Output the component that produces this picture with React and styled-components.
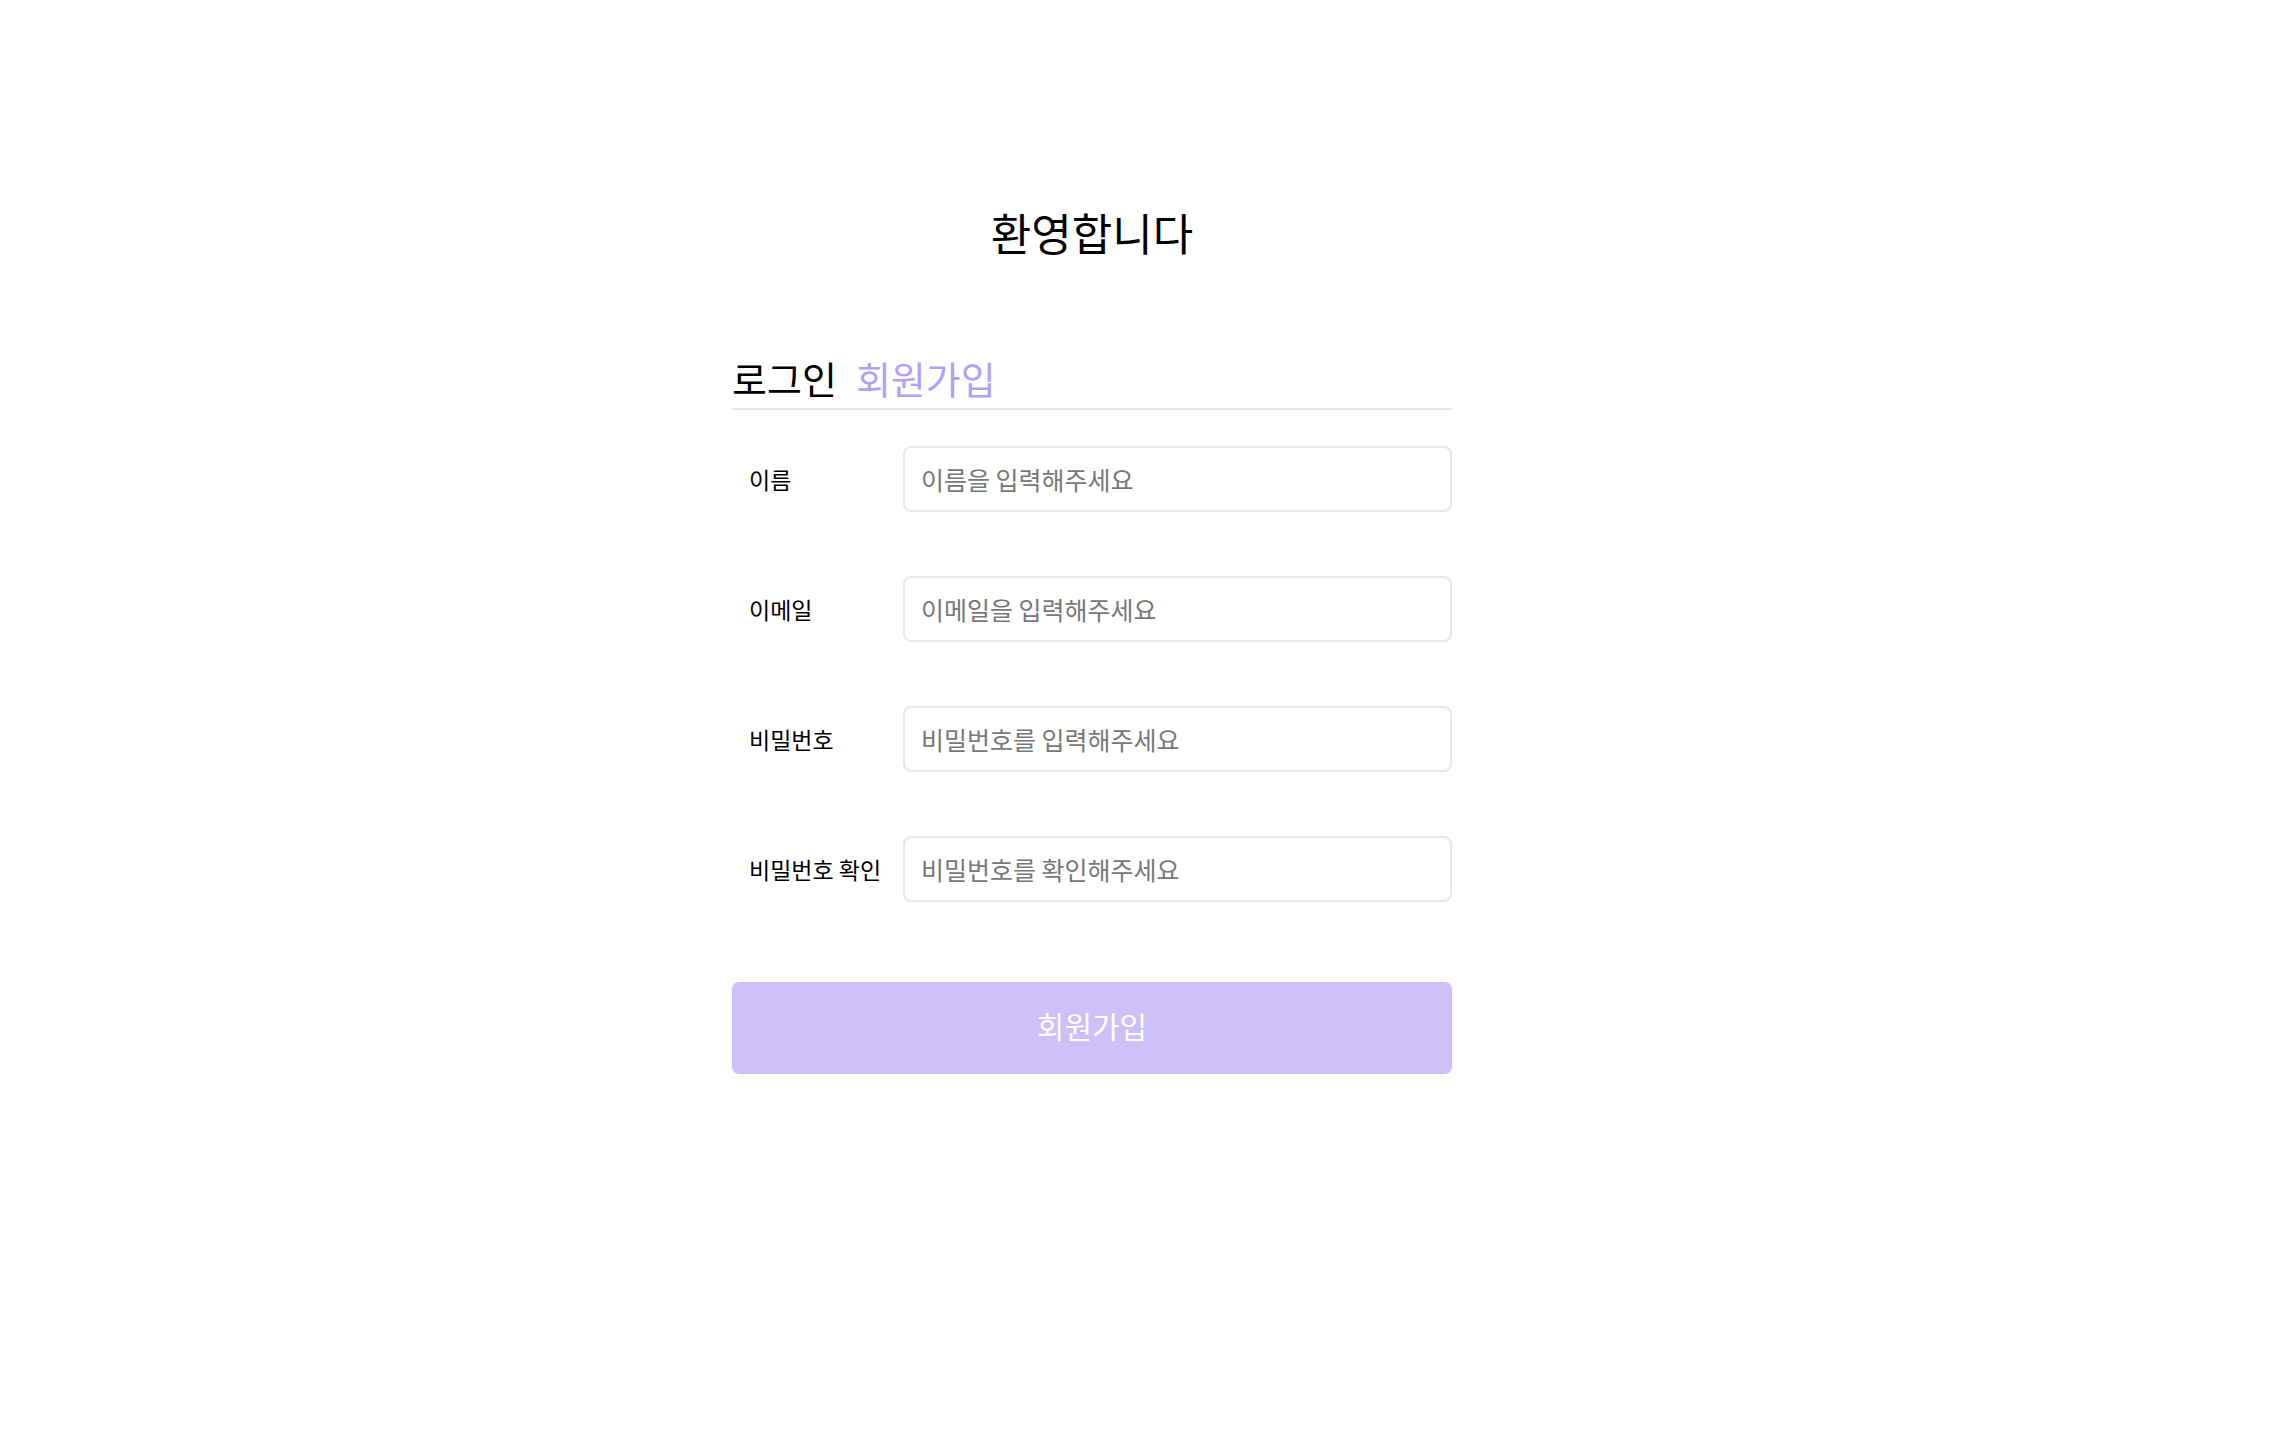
import React, { useState } from 'react';
import styled, { createGlobalStyle } from 'styled-components';

const GlobalStyle = createGlobalStyle`
  * {
    box-sizing: border-box;
  }

  body {
    margin: 0;
    background-color: #ffffff;
    font-family: "Noto Sans CJK KR", "Noto Sans", sans-serif;
    color: #000000;
  }
`;

const Page = styled.div`
  display: flex;
  justify-content: center;
  padding: 202px 86px 0 0;
  min-height: 1442px;
`;

const Container = styled.div`
  width: 720px;
  display: flex;
  flex-direction: column;
`;

const Title = styled.h1`
  margin: 0;
  text-align: center;
  font-size: 44px;
  font-weight: 400;
  line-height: 60px;
`;

const Tabs = styled.div`
  display: flex;
  gap: 19px;
  margin-top: 93px;
  padding-bottom: 7px;
  border-bottom: 2px solid #e6e6e6;
`;

const Tab = styled.button`
  padding: 0;
  border: none;
  background: none;
  cursor: pointer;
  font-family: inherit;
  font-size: 38px;
  font-weight: 400;
  line-height: 46px;
  color: ${(props) => props?.active ? '#b39ff8' : '#000000'};
`;

const Form = styled.form`
  display: flex;
  flex-direction: column;
  gap: 64px;
  margin-top: 36px;
`;

const Row = styled.div`
  display: flex;
  align-items: center;
  height: 66px;
`;

const Label = styled.label`
  width: 171px;
  padding-left: 17px;
  font-size: 23px;
  font-weight: 400;
  white-space: nowrap;
`;

const Input = styled.input`
  flex: 1;
  height: 66px;
  padding: 0 16px;
  border: 2px solid #e8e8e8;
  border-radius: 8px;
  outline: none;
  font-family: inherit;
  font-size: 25px;
  color: #000000;

  &::placeholder {
    color: #777777;
  }
`;

const Submit = styled.button`
  margin-top: 80px;
  height: 92px;
  padding-bottom: 8px;
  border: none;
  border-radius: 7px;
  background-color: #cdc0f8;
  color: #ffffff;
  font-family: inherit;
  font-size: 30px;
  font-weight: 400;
  cursor: pointer;
`;

const fields = [
  { id: 'name', label: '이름', type: 'text', placeholder: '이름을 입력해주세요' },
  { id: 'email', label: '이메일', type: 'email', placeholder: '이메일을 입력해주세요' },
  { id: 'password', label: '비밀번호', type: 'password', placeholder: '비밀번호를 입력해주세요' },
  { id: 'passwordConfirm', label: '비밀번호 확인', type: 'password', placeholder: '비밀번호를 확인해주세요' },
];

const App = () => {
  const [tab, setTab] = useState('signup');
  const [values, setValues] = useState({});

  return (
    <>
      <GlobalStyle />
      <Page>
        <Container>
          <Title>환영합니다</Title>
          <Tabs>
            <Tab active={tab === 'login'} onClick={() => setTab('login')}>로그인</Tab>
            <Tab active={tab === 'signup'} onClick={() => setTab('signup')}>회원가입</Tab>
          </Tabs>
          <Form onSubmit={(event) => event.preventDefault()}>
            {fields.map((field) => (
              <Row key={field.id}>
                <Label htmlFor={field.id}>{field.label}</Label>
                <Input
                  id={field.id}
                  type={field.type}
                  placeholder={field.placeholder}
                  value={values[field.id] ?? ''}
                  onChange={(event) => setValues({ ...values, [field.id]: event?.target?.value ?? '' })}
                />
              </Row>
            ))}
          </Form>
          <Submit type="button">회원가입</Submit>
        </Container>
      </Page>
    </>
  );
};

export default App;
